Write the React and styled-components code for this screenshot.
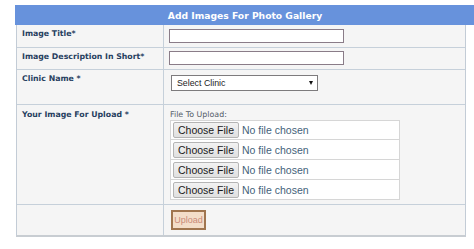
import React from "react";
import styled, { createGlobalStyle } from "styled-components";

const GlobalStyle = createGlobalStyle`
  html, body {
    margin: 0;
    padding: 0;
    background: #ffffff;
  }
  body {
    font-family: "DejaVu Sans", Verdana, sans-serif;
  }
`;

const Page = styled.div`
  width: 474px;
  height: 249px;
  padding: 5px 0 0 16px;
  box-sizing: border-box;
`;

const Form = styled.div`
  width: 448px;
  border-left: 1px solid #c3ccd6;
  border-right: 1px solid #c3ccd6;
  border-bottom: 2px solid #c8cdd2;
  background: #f5f5f5;
`;

const Title = styled.div`
  height: 20px;
  background: #6792dc;
  color: #ffffff;
  font-weight: bold;
  font-size: 9.2px;
  display: flex;
  align-items: center;
  justify-content: center;
  margin: 0 -1px;
`;

const Row = styled.div`
  display: grid;
  grid-template-columns: 147px 1fr;
  height: ${(p) => p.$h}px;
  box-sizing: border-box;
  border-top: 1px solid #c6d0da;
  &:first-of-type {
    border-top: none;
  }
`;

const Label = styled.div`
  border-right: 1px solid #c6d0da;
  padding: ${(p) => p.$top || 4}px 0 0 5px;
  color: #27405f;
  font-weight: bold;
  font-size: 7.8px;
`;

const Field = styled.div`
  padding: ${(p) => p.$top || 3}px 0 0 5px;
  display: flex;
  flex-direction: column;
  align-items: flex-start;
`;

const TextInput = styled.div`
  width: 175px;
  height: 14px;
  box-sizing: border-box;
  border: 1px solid #8a7c88;
  background: #ffffff;
`;

const Select = styled.div`
  width: 147px;
  height: 16px;
  margin-left: 2px;
  box-sizing: border-box;
  border: 1px solid #7d7b7d;
  background: #ffffff;
  display: flex;
  align-items: center;
  justify-content: space-between;
  padding: 0 4px 0 5px;
  font-family: "Liberation Sans", Arial, sans-serif;
  font-size: 8.8px;
  color: #222;
`;

const Caret = styled.span`
  width: 0;
  height: 0;
  border-left: 2.5px solid transparent;
  border-right: 2.5px solid transparent;
  border-top: 4px solid #111;
`;

const Hint = styled.div`
  font-size: 7.9px;
  line-height: 9px;
  color: #56606a;
  margin: 0 0 1px 1px;
`;

const FileList = styled.div`
  width: 230px;
  margin-left: 1px;
  display: flex;
  flex-direction: column;
`;

const FileRow = styled.div`
  height: 20px;
  box-sizing: border-box;
  border: 1px solid #d6d6d6;
  border-top: ${(p) => (p.$first ? "1px solid #d6d6d6" : "none")};
  background: #ffffff;
  display: flex;
  align-items: center;
  padding-left: 2px;
  gap: 3px;
  font-family: "Liberation Sans", Arial, sans-serif;
`;

const ChooseButton = styled.div`
  height: 16px;
  box-sizing: border-box;
  padding: 0 4px;
  border: 1px solid #b4b4b4;
  border-radius: 2px;
  background: linear-gradient(#f2f2f2, #e0e0e0);
  color: #1a1a1a;
  font-size: 10.5px;
  display: flex;
  align-items: center;
`;

const NoFile = styled.span`
  font-size: 10.5px;
  color: #44627a;
`;

const UploadButton = styled.div`
  width: 35px;
  height: 20px;
  margin-left: 2px;
  box-sizing: border-box;
  border: 2px solid #a0754f;
  background: #f3ddc9;
  color: #c98a78;
  font-family: "Liberation Sans", Arial, sans-serif;
  font-size: 9px;
  display: flex;
  align-items: center;
  justify-content: center;
`;

const files = [1, 2, 3, 4];

export default function App() {
  return (
    <>
      <GlobalStyle />
      <Page>
        <Title>Add Images For Photo Gallery</Title>
        <Form>
          <Row $h={22}>
            <Label>Image Title*</Label>
            <Field $top={4}>
              <TextInput />
            </Field>
          </Row>
          <Row $h={22}>
            <Label>Image Description In Short*</Label>
            <Field $top={3}>
              <TextInput />
            </Field>
          </Row>
          <Row $h={35}>
            <Label>Clinic Name *</Label>
            <Field $top={5}>
              <Select>
                Select Clinic
                <Caret />
              </Select>
            </Field>
          </Row>
          <Row $h={100}>
            <Label $top={5}>Your Image For Upload *</Label>
            <Field $top={5}>
              <Hint>File To Upload:</Hint>
              <FileList>
                {files.map((n, i) => (
                  <FileRow key={n} $first={i === 0}>
                    <ChooseButton>Choose File</ChooseButton>
                    <NoFile>No file chosen</NoFile>
                  </FileRow>
                ))}
              </FileList>
            </Field>
          </Row>
          <Row $h={31}>
            <Label />
            <Field $top={5}>
              <UploadButton>Upload</UploadButton>
            </Field>
          </Row>
        </Form>
      </Page>
    </>
  );
}
